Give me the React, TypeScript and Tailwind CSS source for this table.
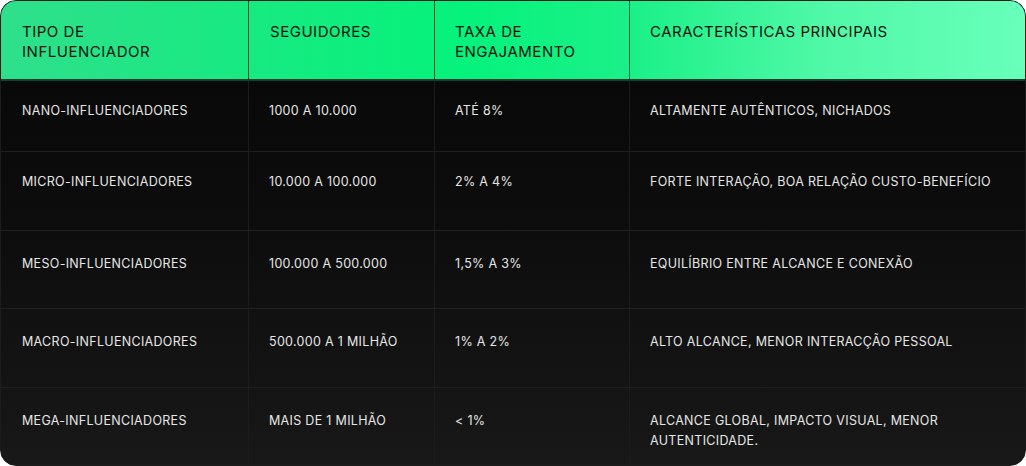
import React from "react";

const rows: { h: string; cells: React.ReactNode[] }[] = [
  { h: "h-[71px]", cells: ["NANO-INFLUENCIADORES", "1000 A 10.000", "ATÉ 8%", "ALTAMENTE AUTÊNTICOS, NICHADOS"] },
  { h: "h-[79px]", cells: ["MICRO-INFLUENCIADORES", "10.000 A 100.000", "2% A 4%", "FORTE INTERAÇÃO, BOA RELAÇÃO CUSTO-BENEFÍCIO"] },
  { h: "h-[78px]", cells: ["MESO-INFLUENCIADORES", "100.000 A 500.000", "1,5% A 3%", "EQUILÍBRIO ENTRE ALCANCE E CONEXÃO"] },
  { h: "h-[79px]", cells: ["MACRO-INFLUENCIADORES", "500.000 A 1 MILHÃO", "1% A 2%", "ALTO ALCANCE, MENOR INTERACÇÃO PESSOAL"] },
  {
    h: "h-[78px]",
    cells: [
      "MEGA-INFLUENCIADORES",
      "MAIS DE 1 MILHÃO",
      "< 1%",
      <>
        ALCANCE GLOBAL, IMPACTO VISUAL, MENOR
        <br />
        AUTENTICIDADE.
      </>,
    ],
  },
];

export default function App() {
  return (
    <div className="w-[1026px] h-[466px] bg-white" style={{ fontFamily: "Inter, 'Noto Sans', sans-serif" }}>
      <div className="w-full h-full rounded-[16px] overflow-hidden border border-[#1c1c1c] bg-gradient-to-b from-[#070707] via-[#0d0d0d] to-[#181818] flex flex-col">
        <div className="grid grid-cols-[248px_186px_195px_1fr] h-[80px] shrink-0 border-b-2 border-[#17402c] bg-[linear-gradient(90deg,#2fdf8b_0%,#12ec7f_30%,#05f27c_45%,#1cf088_62%,#4ff8a6_80%,#68ffbb_100%)] text-[#0a140e] text-[15px] leading-5 tracking-[0.035em]">
          <div className="pl-[21px] pt-[21px] border-r border-[#0f5a35]">TIPO DE<br />INFLUENCIADOR</div>
          <div className="pl-[21px] pt-[21px] border-r border-[#0f5a35]">SEGUIDORES</div>
          <div className="pl-[20px] pt-[21px] border-r border-[#0f5a35]">TAXA DE<br />ENGAJAMENTO</div>
          <div className="pl-[20px] pt-[21px]">CARACTERÍSTICAS PRINCIPAIS</div>
        </div>
        {rows.map((r, i) => (
          <div
            key={i}
            className={`grid grid-cols-[248px_186px_195px_1fr] ${r.h} shrink-0 ${i < rows.length - 1 ? "border-b border-[#202020]" : ""} text-[#e6e6e6] text-[12.5px] leading-5 tracking-[0.025em]`}
          >
            {r.cells.map((c, j) => (
              <div
                key={j}
                className={`${j === 0 ? "pl-[21px]" : "pl-[20px]"} ${i === 0 || i === 1 ? "pt-[20px]" : "pt-[23px]"} ${j < 3 ? "border-r border-[#1c1c1c]" : ""}`}
              >
                {c}
              </div>
            ))}
          </div>
        ))}
      </div>
    </div>
  );
}
